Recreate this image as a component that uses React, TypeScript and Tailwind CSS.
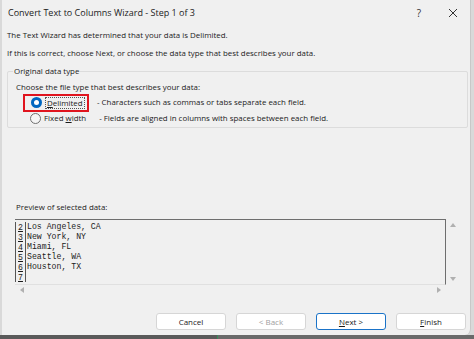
const ROWS = [
  { n: "2", text: "Los Angeles, CA" },
  { n: "3", text: "New York, NY" },
  { n: "4", text: "Miami, FL" },
  { n: "5", text: "Seattle, WA" },
  { n: "6", text: "Houston, TX" },
  { n: "7", text: "" },
];

const ui = "font-['Open_Sans','Noto_Sans',sans-serif]";

function Button({
  children,
  primary,
  disabled,
}: {
  children: React.ReactNode;
  primary?: boolean;
  disabled?: boolean;
}) {
  return (
    <button
      className={[
        "h-[17px] w-[70px] rounded-[3px] bg-white text-[8px] leading-none",
        primary ? "border border-[#1a73c8]" : "border border-[#d6d6d6]",
        disabled ? "text-[#a0a0a0]" : "text-[#1b1b1b]",
      ].join(" ")}
    >
      {children}
    </button>
  );
}

export default function App() {
  return (
    <div className={`w-[474px] h-[339px] bg-[#d9d9d9] overflow-hidden ${ui}`}>
      <div className="ml-[2px] w-[469px] h-[335px] bg-[#f0f0f0] border-r border-[#c8c8c8] rounded-br-[6px] flex flex-col text-[#1b1b1b]">
        {/* title bar */}
        <div className="h-[26px] flex items-center pl-[6px] text-[9px]">
          <span className="flex-1">Convert Text to Columns Wizard - Step 1 of 3</span>
          <span className="w-[10px] text-center text-[10px] mr-[24px] text-[#333]">?</span>
          <svg width="10" height="10" viewBox="0 0 10 10" className="mr-[12px]">
            <path d="M1 1L9 9M9 1L1 9" stroke="#333" strokeWidth="1" />
          </svg>
        </div>

        <div className="pl-[5px] text-[7.9px]">
          <p className="leading-[18px]">The Text Wizard has determined that your data is Delimited.</p>
          <p className="leading-[18px]">
            If this is correct, choose Next, or choose the data type that best describes your data.
          </p>
        </div>

        {/* group box */}
        <div className="relative mt-[9px] ml-[5px] mr-[2px] h-[57px] border border-[#dcdcdc] rounded-[2px]">
          <span className="absolute -top-[7px] left-[5px] px-[1px] bg-[#f0f0f0] text-[7.9px] leading-[13px]">
            Original data type
          </span>
          <div className="pl-[8px] pt-[9px] text-[7.9px]">
            <p className="leading-[13px]">Choose the file type that best describes your data:</p>
            <div className="flex items-center h-[17px]">
              <div className="ml-[7px] w-[66px] h-[18px] border-[2px] border-[#e0141e] flex items-center pl-[6px]">
                <span className="w-[11px] h-[11px] rounded-full bg-[#0067c0] flex items-center justify-center">
                  <span className="w-[5px] h-[5px] rounded-full bg-white" />
                </span>
                <span className="ml-[3px] px-[1px] border border-dotted border-[#555] leading-[10px]">
                  <span className="underline">D</span>elimited
                </span>
              </div>
              <span className="ml-[8px]">- Characters such as commas or tabs separate each field.</span>
            </div>
            <div className="flex items-center h-[15px]">
              <span className="ml-[14px] w-[11px] h-[11px] rounded-full border border-[#707070] bg-[#f5f5f5]" />
              <span className="ml-[3px]">
                Fixed <span className="underline">w</span>idth
              </span>
              <span className="ml-[13px]">- Fields are aligned in columns with spaces between each field.</span>
            </div>
          </div>
        </div>

        <p className="mt-[72px] pl-[14px] text-[7.9px] leading-[14px]">Preview of selected data:</p>

        {/* preview */}
        <div className="flex mt-[5px] ml-[13px]">
          <div className="w-[431px] h-[66px] border-t border-r border-[#6e6e6e] border-b border-b-[#e0e0e0] pt-[2px] overflow-hidden">
            {ROWS.map((r) => (
              <div
                key={r.n}
                className="flex h-[10px] items-center font-['Liberation_Mono',monospace] text-[8.2px] leading-none"
              >
                <span className="w-[11px] h-[10px] border-x border-[#555] flex items-end justify-center">
                  <span className="underline">{r.n}</span>
                </span>
                <span className="ml-[1px]">{r.text}</span>
              </div>
            ))}
          </div>
          <div className="w-[14px] flex flex-col items-center justify-between py-[4px]">
            <svg width="6" height="4" viewBox="0 0 6 4">
              <path d="M0 4L3 0L6 4Z" fill="#b0b0b0" />
            </svg>
            <svg width="6" height="4" viewBox="0 0 6 4">
              <path d="M0 0L3 4L6 0Z" fill="#b0b0b0" />
            </svg>
          </div>
        </div>
        <div className="flex items-center justify-between ml-[18px] mr-[29px] h-[10px]">
          <svg width="4" height="6" viewBox="0 0 4 6">
            <path d="M4 0L0 3L4 6Z" fill="#b0b0b0" />
          </svg>
          <svg width="4" height="6" viewBox="0 0 4 6">
            <path d="M0 0L4 3L0 6Z" fill="#b0b0b0" />
          </svg>
        </div>

        {/* buttons */}
        <div className="mt-auto mb-[5px] flex justify-end gap-[10px] pr-[4px]">
          <Button>Cancel</Button>
          <Button disabled>&lt; Back</Button>
          <Button primary>
            <span className="underline">N</span>ext &gt;
          </Button>
          <Button>
            <span className="underline">F</span>inish
          </Button>
        </div>
      </div>
      <div className="flex h-[4px]">
        <div className="w-[217px] bg-[#5a5a5a]" />
        <div className="w-[1px] bg-[#3a8a5a]" />
        <div className="flex-1 bg-[#6a6a6a]" />
      </div>
    </div>
  );
}
